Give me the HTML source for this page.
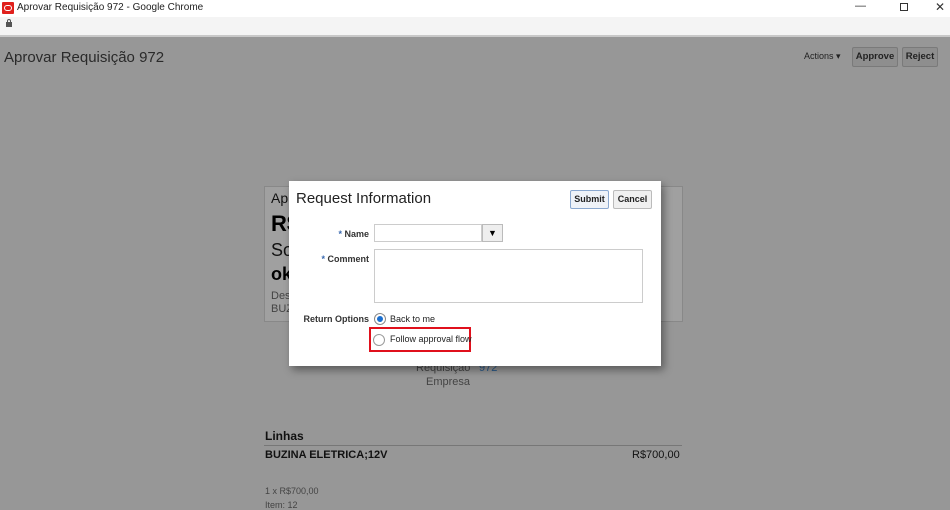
<!DOCTYPE html><html><head><style>
body{margin:0;width:950px;height:508px;overflow:hidden;background:#979797;font-family:"Liberation Sans",sans-serif;position:relative}
.a{position:absolute;white-space:nowrap}
.btn{position:absolute;border:1px solid #7a7a7a;border-radius:2px;font-size:10px;font-weight:bold;text-align:center;line-height:17px;box-sizing:border-box}
.lb{position:absolute;right:581px;font-size:9px;color:#333;font-weight:bold;white-space:nowrap}
</style></head><body>
<div class="a" style="left:0;top:0;width:950px;height:17px;background:#fff"></div>
<div class="a" style="left:2px;top:2px;width:12px;height:12px;background:#e0201c;border-radius:1px"></div>
<div class="a" style="left:4px;top:5px;width:6px;height:4px;border:1px solid #fff;border-radius:3px"></div>
<div class="a" style="left:17px;top:2px;font-size:10px;color:#222">Aprovar Requisição 972 - Google Chrome</div>
<div class="a" style="left:855px;top:0;font-size:11px;color:#333">—</div>
<div class="a" style="left:900px;top:3px;width:6px;height:6px;border:1px solid #333"></div>
<div class="a" style="left:935px;top:0;font-size:12px;color:#333">✕</div>
<div class="a" style="left:0;top:17px;width:950px;height:18px;background:#f4f4f4;border-bottom:2px solid #c8c8c8"></div>
<div class="a" style="left:6px;top:22px;width:6px;height:5px;background:#555"></div>
<div class="a" style="left:7px;top:19px;width:2px;height:3px;border:1px solid #555;border-bottom:none;border-radius:2px 2px 0 0"></div>
<div class="a" style="left:4px;top:49px;font-size:15px;color:#2a2a2a">Aprovar Requisição 972</div>
<div class="a" style="left:804px;top:51px;font-size:9px;color:#222">Actions ▾</div>
<div class="btn" style="left:852px;top:47px;width:46px;height:20px;background:#8e8e8e;color:#222;font-size:9.5px">Approve</div>
<div class="btn" style="left:902px;top:47px;width:36px;height:20px;background:#8e8e8e;color:#222;font-size:9.5px">Reject</div>
<div class="a" style="left:264px;top:186px;width:417px;height:134px;background:#a0a0a0;border:1px solid #888"></div>
<div class="a" style="left:271px;top:190px;font-size:14px;color:#111">Ap</div>
<div class="a" style="left:271px;top:211px;font-size:22px;font-weight:bold;color:#000">R$</div>
<div class="a" style="left:271px;top:240px;font-size:18px;color:#111">So</div>
<div class="a" style="left:271px;top:264px;font-size:18px;font-weight:bold;color:#000">ok</div>
<div class="a" style="left:271px;top:290px;font-size:11px;color:#444">Des</div>
<div class="a" style="left:271px;top:303px;font-size:11px;color:#444">BUZ</div>
<div class="a" style="left:416px;top:362px;font-size:11px;color:#444">Requisição</div>
<div class="a" style="left:479px;top:362px;font-size:11px;color:#2a5a8a">972</div>
<div class="a" style="left:426px;top:376px;font-size:11px;color:#444">Empresa</div>
<div class="a" style="left:265px;top:429px;font-size:12px;font-weight:bold;color:#111">Linhas</div>
<div class="a" style="left:264px;top:445px;width:418px;height:1px;background:#777"></div>
<div class="a" style="left:265px;top:449px;font-size:11px;font-weight:bold;color:#111">BUZINA ELETRICA;12V</div>
<div class="a" style="left:632px;top:449px;font-size:11px;color:#111">R$700,00</div>
<div class="a" style="left:265px;top:486px;font-size:9px;color:#444">1 x R$700,00</div>
<div class="a" style="left:265px;top:500px;font-size:9px;color:#444">Item: 12</div>
<div class="a" style="left:289px;top:181px;width:372px;height:185px;background:#fff;box-shadow:3px 4px 8px rgba(0,0,0,.4)"></div>
<div class="a" style="left:296px;top:190px;font-size:15px;color:#222">Request Information</div>
<div class="btn" style="left:570px;top:190px;width:39px;height:19px;background:#eef2f8;border-color:#8aa8d0;color:#222;font-size:9px">Submit</div>
<div class="btn" style="left:613px;top:190px;width:39px;height:19px;background:#f0f0f0;border-color:#bbb;color:#222;font-size:9px">Cancel</div>
<div class="lb" style="top:229px"><span style="color:#3a6ab0">*</span> Name</div>
<div class="a" style="left:374px;top:224px;width:108px;height:18px;border:1px solid #ccc;box-sizing:border-box"></div>
<div class="a" style="left:482px;top:224px;width:21px;height:18px;border:1px solid #bbb;background:#eee;box-sizing:border-box;font-size:9px;text-align:center;line-height:17px">▼</div>
<div class="lb" style="top:254px"><span style="color:#3a6ab0">*</span> Comment</div>
<div class="a" style="left:374px;top:249px;width:269px;height:54px;border:1px solid #ccc;box-sizing:border-box"></div>
<div class="lb" style="top:314px">Return Options</div>
<div class="a" style="left:374px;top:313px;width:10px;height:10px;border:1px solid #888;border-radius:50%"></div>
<div class="a" style="left:377px;top:316px;width:6px;height:6px;background:#1a6fd0;border-radius:50%"></div>
<div class="a" style="left:390px;top:314px;font-size:9px;color:#222">Back to me</div>
<div class="a" style="left:369px;top:327px;width:98px;height:21px;border:2px solid #e0101c"></div>
<div class="a" style="left:373px;top:334px;width:10px;height:10px;border:1px solid #999;border-radius:50%"></div>
<div class="a" style="left:390px;top:334px;font-size:9px;color:#222">Follow approval flow</div>
</body></html>
